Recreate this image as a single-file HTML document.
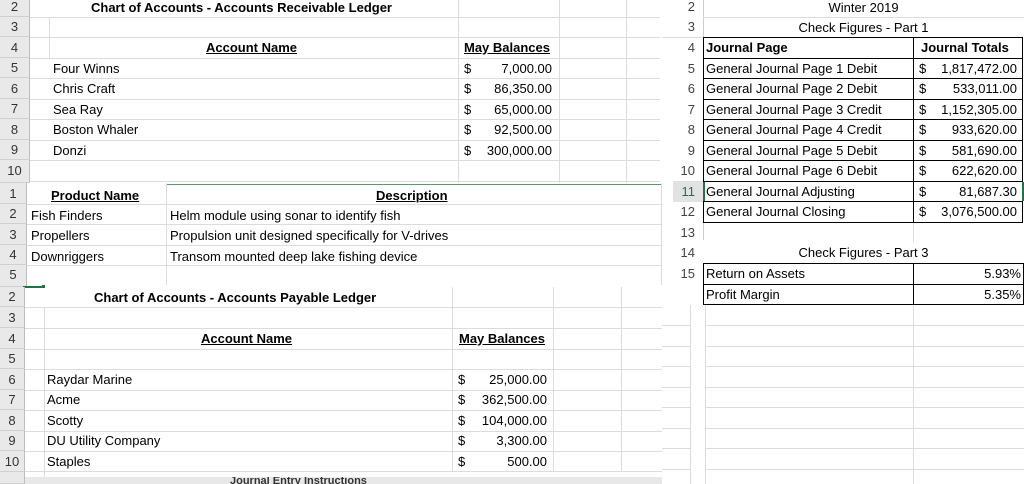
<!DOCTYPE html>
<html><head><meta charset="utf-8"><style>
body{margin:0;width:1024px;height:484px;overflow:hidden;background:#fff;position:relative;font-family:"Liberation Sans",sans-serif;font-size:13px;color:#000}
div{position:absolute;box-sizing:border-box}
.t{white-space:nowrap;line-height:20px;height:20px}
.h{background:#e9e9e9;color:#333;text-align:center;border-bottom:1px solid #d0d0d0;border-right:1px solid #bdbdbd}
.hl{height:1px;background:#dcdcdc}
.vl{width:1px;background:#dcdcdc}
.b{font-weight:bold}
.u{text-decoration:underline}
.c{text-align:center}
.r{text-align:right}
.n{color:#444}
.k{border:1px solid #000}
</style></head><body>

<div style="left:0;top:0;width:660px;height:183px;background:#fff"></div>
<div class="h t" style="left:0;top:-3px;width:30px;height:20px">2</div>
<div class="h t" style="left:0;top:17px;width:30px">3</div>
<div class="h t" style="left:0;top:37px;width:30px;height:21px;line-height:21px">4</div>
<div class="h t" style="left:0;top:58px;width:30px">5</div>
<div class="h t" style="left:0;top:78px;width:30px;height:21px;line-height:21px">6</div>
<div class="h t" style="left:0;top:99px;width:30px">7</div>
<div class="h t" style="left:0;top:119px;width:30px;height:21px;line-height:21px">8</div>
<div class="h t" style="left:0;top:140px;width:30px">9</div>
<div class="h t" style="left:0;top:160px;width:30px;height:23px;line-height:21px">10</div>
<div class="hl" style="left:30px;top:17px;width:630px"></div>
<div class="hl" style="left:30px;top:37px;width:630px"></div>
<div class="hl" style="left:30px;top:58px;width:630px"></div>
<div class="hl" style="left:30px;top:78px;width:630px"></div>
<div class="hl" style="left:30px;top:99px;width:630px"></div>
<div class="hl" style="left:30px;top:119px;width:630px"></div>
<div class="hl" style="left:30px;top:140px;width:630px"></div>
<div class="hl" style="left:30px;top:160px;width:630px"></div>
<div class="hl" style="left:30px;top:181px;width:630px"></div>
<div class="vl" style="left:49px;top:17px;height:41px"></div>
<div class="vl" style="left:458px;top:0;height:183px"></div>
<div class="vl" style="left:559px;top:0;height:183px"></div>
<div class="vl" style="left:626px;top:0;height:183px"></div>
<div class="t b" style="left:91px;top:-2px">Chart of Accounts - Accounts Receivable Ledger</div>
<div class="t b u" style="left:206px;top:38px">Account Name</div>
<div class="t b u" style="left:464px;top:38px">May Balances</div>
<div class="t" style="left:53px;top:59px">Four Winns</div>
<div class="t" style="left:53px;top:79px">Chris Craft</div>
<div class="t" style="left:53px;top:100px">Sea Ray</div>
<div class="t" style="left:53px;top:120px">Boston Whaler</div>
<div class="t" style="left:53px;top:141px">Donzi</div>
<div class="t" style="left:464px;top:59px">$</div><div class="t r" style="left:470px;top:59px;width:82px">7,000.00</div>
<div class="t" style="left:464px;top:79px">$</div><div class="t r" style="left:470px;top:79px;width:82px">86,350.00</div>
<div class="t" style="left:464px;top:100px">$</div><div class="t r" style="left:470px;top:100px;width:82px">65,000.00</div>
<div class="t" style="left:464px;top:120px">$</div><div class="t r" style="left:470px;top:120px;width:82px">92,500.00</div>
<div class="t" style="left:464px;top:141px">$</div><div class="t r" style="left:470px;top:141px;width:82px">300,000.00</div>

<div style="left:0;top:183px;width:662px;height:104px;background:#fff"></div>
<div class="h t" style="left:0;top:183px;width:27px;height:21px;line-height:21px">1</div>
<div class="h t" style="left:0;top:204px;width:27px">2</div>
<div class="h t" style="left:0;top:224px;width:27px;height:21px;line-height:21px">3</div>
<div class="h t" style="left:0;top:245px;width:27px">4</div>
<div class="h t" style="left:0;top:265px;width:27px;height:22px">5</div>
<div style="left:166px;top:184px;width:495px;height:1px;background:#5a9a6e"></div>
<div class="hl" style="left:27px;top:204px;width:634px"></div>
<div class="hl" style="left:27px;top:224px;width:634px"></div>
<div class="hl" style="left:27px;top:245px;width:634px"></div>
<div class="hl" style="left:27px;top:265px;width:634px"></div>
<div class="vl" style="left:166px;top:183px;height:102px"></div>
<div class="vl" style="left:661px;top:183px;height:102px"></div>
<div style="left:23px;top:286px;width:20px;height:2px;background:#217346"></div>
<div style="left:42px;top:285px;width:3px;height:3px;background:#217346"></div>
<div class="t b u" style="left:51px;top:186px">Product Name</div>
<div class="t b u" style="left:376px;top:186px">Description</div>
<div class="t" style="left:31px;top:206px">Fish Finders</div>
<div class="t" style="left:31px;top:226px">Propellers</div>
<div class="t" style="left:31px;top:247px">Downriggers</div>
<div class="t" style="left:170px;top:206px">Helm module using sonar to identify fish</div>
<div class="t" style="left:170px;top:226px">Propulsion unit designed specifically for V-drives</div>
<div class="t" style="left:170px;top:247px">Transom mounted deep lake fishing device</div>

<div class="h t" style="left:0;top:287px;width:25px;height:20px">2</div>
<div class="h t" style="left:0;top:307px;width:25px;height:21px;line-height:21px">3</div>
<div class="h t" style="left:0;top:328px;width:25px;height:21px;line-height:21px">4</div>
<div class="h t" style="left:0;top:349px;width:25px">5</div>
<div class="h t" style="left:0;top:369px;width:25px;height:21px;line-height:21px">6</div>
<div class="h t" style="left:0;top:390px;width:25px">7</div>
<div class="h t" style="left:0;top:410px;width:25px;height:21px;line-height:21px">8</div>
<div class="h t" style="left:0;top:431px;width:25px">9</div>
<div class="h t" style="left:0;top:451px;width:25px;height:21px;line-height:21px">10</div>
<div class="h" style="left:0;top:472px;width:25px;height:12px"></div>
<div class="hl" style="left:25px;top:307px;width:637px"></div>
<div class="hl" style="left:25px;top:328px;width:637px"></div>
<div class="hl" style="left:25px;top:349px;width:637px"></div>
<div class="hl" style="left:25px;top:369px;width:637px"></div>
<div class="hl" style="left:25px;top:390px;width:637px"></div>
<div class="hl" style="left:25px;top:410px;width:637px"></div>
<div class="hl" style="left:25px;top:431px;width:637px"></div>
<div class="hl" style="left:25px;top:451px;width:637px"></div>
<div class="hl" style="left:25px;top:471px;width:637px"></div>
<div class="vl" style="left:44px;top:307px;height:177px"></div>
<div class="vl" style="left:452px;top:287px;height:185px"></div>
<div class="vl" style="left:553px;top:287px;height:185px"></div>
<div class="vl" style="left:621px;top:287px;height:185px"></div>
<div style="left:25px;top:477px;width:637px;height:7px;background:#e8e8e8;overflow:hidden"><div class="b" style="left:205px;top:-3px;font-size:11px;color:#333;white-space:nowrap;line-height:14px">Journal Entry Instructions</div></div>
<div class="t b" style="left:94px;top:288px">Chart of Accounts - Accounts Payable Ledger</div>
<div class="t b u" style="left:201px;top:329px">Account Name</div>
<div class="t b u" style="left:459px;top:329px">May Balances</div>
<div class="t" style="left:47px;top:370px">Raydar Marine</div>
<div class="t" style="left:47px;top:390px">Acme</div>
<div class="t" style="left:47px;top:411px">Scotty</div>
<div class="t" style="left:47px;top:431px">DU Utility Company</div>
<div class="t" style="left:47px;top:452px">Staples</div>
<div class="t" style="left:458px;top:370px">$</div><div class="t r" style="left:465px;top:370px;width:82px">25,000.00</div>
<div class="t" style="left:458px;top:390px">$</div><div class="t r" style="left:465px;top:390px;width:82px">362,500.00</div>
<div class="t" style="left:458px;top:411px">$</div><div class="t r" style="left:465px;top:411px;width:82px">104,000.00</div>
<div class="t" style="left:458px;top:431px">$</div><div class="t r" style="left:465px;top:431px;width:82px">3,300.00</div>
<div class="t" style="left:458px;top:452px">$</div><div class="t r" style="left:465px;top:452px;width:82px">500.00</div>

<div style="left:662px;top:0;width:362px;height:305px;background:#fff"></div>
<div class="vl" style="left:703px;top:0;height:240px;background:#ccc"></div>
<div class="hl" style="left:703px;top:17px;width:321px"></div>
<div class="hl" style="left:662px;top:37px;width:40px"></div>
<div class="hl" style="left:703px;top:263px;width:321px"></div>
<div class="vl" style="left:913px;top:222px;height:20px"></div>
<div class="vl" style="left:913px;top:305px;height:179px"></div>
<div class="vl" style="left:705px;top:305px;height:179px"></div>
<div class="hl" style="left:705px;top:325px;width:319px"></div>
<div class="hl" style="left:705px;top:346px;width:319px"></div>
<div class="hl" style="left:705px;top:366px;width:319px"></div>
<div class="hl" style="left:705px;top:387px;width:319px"></div>
<div class="hl" style="left:705px;top:407px;width:319px"></div>
<div class="hl" style="left:705px;top:428px;width:319px"></div>
<div class="hl" style="left:705px;top:448px;width:319px"></div>
<div class="hl" style="left:705px;top:469px;width:319px"></div>
<div class="vl" style="left:690px;top:305px;height:179px"></div>
<div class="hl" style="left:662px;top:325px;width:28px"></div>
<div class="hl" style="left:662px;top:346px;width:28px"></div>
<div class="hl" style="left:662px;top:366px;width:28px"></div>
<div class="hl" style="left:662px;top:387px;width:28px"></div>
<div class="hl" style="left:662px;top:407px;width:28px"></div>
<div class="hl" style="left:662px;top:428px;width:28px"></div>
<div class="hl" style="left:662px;top:448px;width:28px"></div>
<div class="hl" style="left:662px;top:469px;width:28px"></div>

<div style="left:673px;top:181px;width:30px;height:21px;background:#e2e2e2"></div>
<div class="t r n" style="left:662px;top:-3px;width:33px">2</div>
<div class="t r n" style="left:662px;top:17px;width:33px">3</div>
<div class="t r n" style="left:662px;top:38px;width:33px">4</div>
<div class="t r n" style="left:662px;top:59px;width:33px">5</div>
<div class="t r n" style="left:662px;top:79px;width:33px">6</div>
<div class="t r n" style="left:662px;top:100px;width:33px">7</div>
<div class="t r n" style="left:662px;top:120px;width:33px">8</div>
<div class="t r n" style="left:662px;top:141px;width:33px">9</div>
<div class="t r n" style="left:662px;top:161px;width:33px">10</div>
<div class="t r" style="left:662px;top:182px;width:33px;color:#217346">11</div>
<div class="t r n" style="left:662px;top:202px;width:33px">12</div>
<div class="t r n" style="left:662px;top:223px;width:33px">13</div>
<div class="t r n" style="left:662px;top:243px;width:33px">14</div>
<div class="t r n" style="left:662px;top:264px;width:33px">15</div>

<div class="t c" style="left:703px;top:-2px;width:321px">Winter 2019</div>
<div class="t c" style="left:703px;top:18px;width:321px">Check Figures - Part 1</div>
<div class="t c" style="left:703px;top:243px;width:321px">Check Figures - Part 3</div>

<div class="k" style="left:703px;top:37px;width:211px;height:186px"></div>
<div class="k" style="left:913px;top:37px;width:110px;height:186px"></div>
<div style="left:703px;top:58px;width:320px;height:1px;background:#000"></div>
<div style="left:703px;top:78px;width:320px;height:1px;background:#000"></div>
<div style="left:703px;top:99px;width:320px;height:1px;background:#000"></div>
<div style="left:703px;top:119px;width:320px;height:1px;background:#000"></div>
<div style="left:703px;top:140px;width:320px;height:1px;background:#000"></div>
<div style="left:703px;top:160px;width:320px;height:1px;background:#000"></div>
<div style="left:703px;top:181px;width:320px;height:1px;background:#000"></div>
<div style="left:703px;top:201px;width:320px;height:1px;background:#000"></div>
<div style="left:703px;top:182px;width:2px;height:19px;background:#217346"></div>
<div style="left:1022px;top:182px;width:2px;height:19px;background:#217346"></div>
<div class="t b" style="left:706px;top:38px">Journal Page</div>
<div class="t b" style="left:921px;top:38px">Journal Totals</div>
<div class="t" style="left:706px;top:59px">General Journal Page 1 Debit</div>
<div class="t" style="left:706px;top:79px">General Journal Page 2 Debit</div>
<div class="t" style="left:706px;top:100px">General Journal Page 3 Credit</div>
<div class="t" style="left:706px;top:120px">General Journal Page 4 Credit</div>
<div class="t" style="left:706px;top:141px">General Journal Page 5 Debit</div>
<div class="t" style="left:706px;top:161px">General Journal Page 6 Debit</div>
<div class="t" style="left:706px;top:182px">General Journal Adjusting</div>
<div class="t" style="left:706px;top:202px">General Journal Closing</div>
<div class="t" style="left:919px;top:59px">$</div><div class="t r" style="left:925px;top:59px;width:92px">1,817,472.00</div>
<div class="t" style="left:919px;top:79px">$</div><div class="t r" style="left:925px;top:79px;width:92px">533,011.00</div>
<div class="t" style="left:919px;top:100px">$</div><div class="t r" style="left:925px;top:100px;width:92px">1,152,305.00</div>
<div class="t" style="left:919px;top:120px">$</div><div class="t r" style="left:925px;top:120px;width:92px">933,620.00</div>
<div class="t" style="left:919px;top:141px">$</div><div class="t r" style="left:925px;top:141px;width:92px">581,690.00</div>
<div class="t" style="left:919px;top:161px">$</div><div class="t r" style="left:925px;top:161px;width:92px">622,620.00</div>
<div class="t" style="left:919px;top:182px">$</div><div class="t r" style="left:925px;top:182px;width:92px">81,687.30</div>
<div class="t" style="left:919px;top:202px">$</div><div class="t r" style="left:925px;top:202px;width:92px">3,076,500.00</div>

<div class="k" style="left:703px;top:263px;width:211px;height:42px"></div>
<div class="k" style="left:913px;top:263px;width:111px;height:42px"></div>
<div style="left:703px;top:284px;width:321px;height:1px;background:#000"></div>
<div class="t" style="left:706px;top:264px">Return on Assets</div>
<div class="t" style="left:706px;top:285px">Profit Margin</div>
<div class="t r" style="left:913px;top:264px;width:108px">5.93%</div>
<div class="t r" style="left:913px;top:285px;width:108px">5.35%</div>
</body></html>
